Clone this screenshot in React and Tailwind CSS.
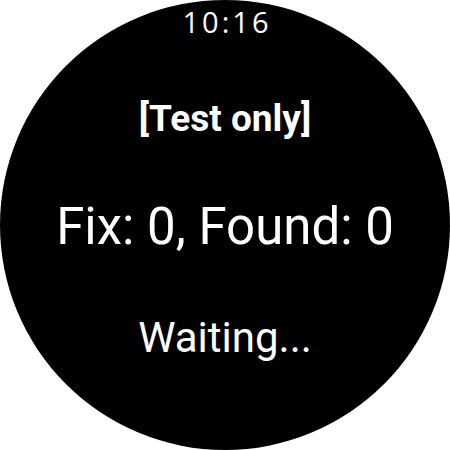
import React from "react";

export default function App() {
    return (
        <div className="w-[450px] h-[450px] bg-white">
            <div className="w-[450px] h-[450px] rounded-full bg-black text-white flex flex-col items-center font-['Roboto',sans-serif]">
                {/* Status time */}
                <div className="mt-[7px] ml-[4px] text-[29px] leading-[29px] tracking-[3px] font-['Open_Sans',sans-serif]">10:16</div>

                <div className="mt-[64px] text-[37px] leading-[37px] font-bold">[Test only]</div>
                <div className="mt-[64px] text-[51px] leading-[51px]">Fix: 0, Found: 0</div>
                <div className="mt-[65px] text-[42px] leading-[42px]">Waiting...</div>
            </div>
        </div>
    );
}
